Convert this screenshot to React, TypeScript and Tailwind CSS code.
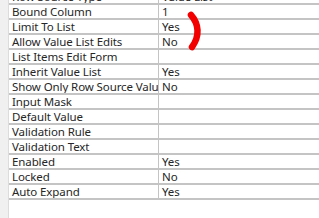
import React from "react";

const rows: [string, string][] = [
  ["Row Source Type", "Value List"],
  ["Bound Column", "1"],
  ["Limit To List", "Yes"],
  ["Allow Value List Edits", "No"],
  ["List Items Edit Form", ""],
  ["Inherit Value List", "Yes"],
  ["Show Only Row Source Values", "No"],
  ["Input Mask", ""],
  ["Default Value", ""],
  ["Validation Rule", ""],
  ["Validation Text", ""],
  ["Enabled", "Yes"],
  ["Locked", "No"],
  ["Auto Expand", "Yes"],
];

export default function App() {
  return (
    <div
      className="relative w-[319px] h-[218px] overflow-hidden bg-white flex text-[#262626] text-[11.5px] tracking-[-0.1px]"
      style={{ fontFamily: '"Noto Sans", "Open Sans", sans-serif' }}
    >
      <div className="w-[9px] shrink-0 bg-[#f0f0f0] border-r border-[#dcdcdc]" />
      <div className="flex-1 flex flex-col -mt-[10px]">
        {rows.map(([k, v]) => (
          <div key={k} className="flex h-[15px] border-b-2 border-[#c4c4c4]">
            <div className="w-[150px] shrink-0 border-r border-[#c4c4c4] pl-[3px] overflow-hidden whitespace-nowrap leading-[13px]">
              {k}
            </div>
            <div className="flex-1 pl-[3px] overflow-hidden whitespace-nowrap leading-[13px]">{v}</div>
          </div>
        ))}
      </div>
      <svg className="absolute left-[180px] top-[8px]" width="30" height="48" viewBox="0 0 30 48">
        <path
          d="M11 7 C 19 16, 20 28, 12 39"
          fill="none"
          stroke="#f20000"
          strokeWidth="6.5"
          strokeLinecap="round"
        />
      </svg>
    </div>
  );
}
